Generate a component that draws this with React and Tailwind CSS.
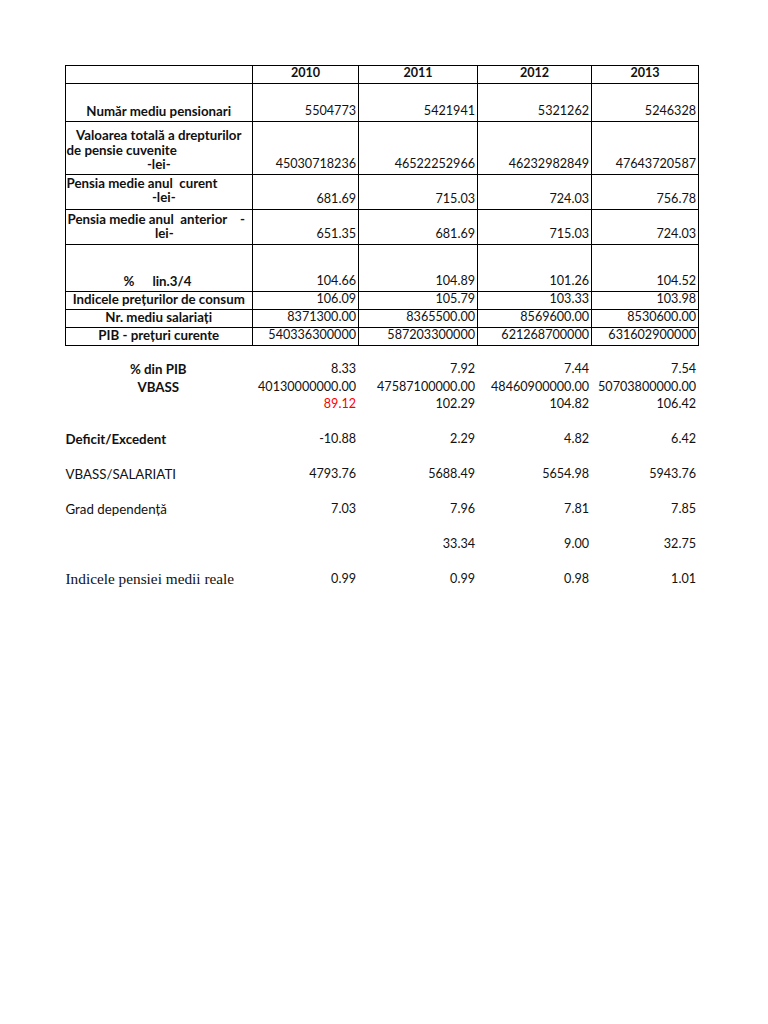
import React from 'react';

const years = ['2010', '2011', '2012', '2013'];

const cell = 'border border-black align-bottom text-right pr-[2px] pb-[2px] whitespace-nowrap';
const labelCell = 'border border-black align-bottom font-bold text-[13.3px] pb-[2px] whitespace-nowrap';

// Table rows: label cell + four values, with row heights taken from the sheet
const rows = [
    {
        h: 'h-[38px]',
        label: <div className="text-center">Număr mediu pensionari</div>,
        values: ['5504773', '5421941', '5321262', '5246328'],
    },
    {
        h: 'h-[53px]',
        label: (
            <>
                <div className="text-center">Valoarea totală a drepturilor</div>
                <div className="pl-[1px]">de pensie cuvenite</div>
                <div className="text-center">-lei-</div>
            </>
        ),
        values: ['45030718236', '46522252966', '46232982849', '47643720587'],
    },
    {
        h: 'h-[35px]',
        pb: 'pb-[4px]',
        label: (
            <>
                <div className="pl-[1px]">Pensia medie anul&nbsp; curent</div>
                <div className="text-center pl-[10px]">-lei-</div>
            </>
        ),
        values: ['681.69', '715.03', '724.03', '756.78'],
    },
    {
        h: 'h-[35px]',
        pb: 'pb-[3px]',
        label: (
            <>
                <div className="pl-[2px] whitespace-pre">{'Pensia medie anul  anterior    -'}</div>
                <div className="text-center pl-[11px]">lei-</div>
            </>
        ),
        values: ['651.35', '681.69', '715.03', '724.03'],
    },
    {
        h: 'h-[47px]',
        label: (
            <div className="flex pl-[58px]">
                <span>%</span>
                <span className="ml-[18px]">lin.3/4</span>
            </div>
        ),
        values: ['104.66', '104.89', '101.26', '104.52'],
    },
    {
        h: 'h-[18px]',
        label: <div className="text-center">Indicele prețurilor de consum</div>,
        values: ['106.09', '105.79', '103.33', '103.98'],
    },
    {
        h: 'h-[18px]',
        label: <div className="text-center">Nr. mediu salariați</div>,
        values: ['8371300.00', '8365500.00', '8569600.00', '8530600.00'],
    },
    {
        h: 'h-[18px]',
        label: <div className="text-center">PIB - prețuri curente</div>,
        values: ['540336300000', '587203300000', '621268700000', '631602900000'],
    },
];

// Rows under the table, no borders
const extra = [
    { label: '% din PIB', style: 'font-bold text-center text-[13.3px]', values: ['8.33', '7.92', '7.44', '7.54'] },
    { label: 'VBASS', style: 'font-bold text-center text-[13.3px]', values: ['40130000000.00', '47587100000.00', '48460900000.00', '50703800000.00'] },
    { label: '', values: ['89.12', '102.29', '104.82', '106.42'], red: true },
    null,
    { label: 'Deficit/Excedent', style: 'font-bold pl-[1px] text-[13.3px]', values: ['-10.88', '2.29', '4.82', '6.42'] },
    null,
    { label: 'VBASS/SALARIATI', style: 'pl-[1px] text-[13.3px]', values: ['4793.76', '5688.49', '5654.98', '5943.76'] },
    null,
    { label: 'Grad dependență', style: 'pl-[1px] text-[13.3px]', values: ['7.03', '7.96', '7.81', '7.85'] },
    null,
    { label: '', values: ['', '33.34', '9.00', '32.75'] },
    null,
    {
        label: 'Indicele pensiei medii reale',
        style: "pl-[1px] text-[15.3px] font-['Liberation_Serif',serif]",
        values: ['0.99', '0.99', '0.98', '1.01'],
    },
];

export default function App() {
    return (
        <div className="w-[768px] h-[1024px] bg-white text-[#111] font-['Lato',sans-serif] text-[12.6px] leading-[14.5px]">
            <div className="pt-[64.5px] pl-[64.5px]">
                <table className="table-fixed border-collapse w-[634px]">
                    <colgroup>
                        <col className="w-[187.5px]" />
                        <col className="w-[106px]" />
                        <col className="w-[119px]" />
                        <col className="w-[114px]" />
                        <col className="w-[107px]" />
                    </colgroup>
                    <thead>
                        <tr className="h-[18px]">
                            <th className="border border-black"></th>
                            {years.map(y => (
                                <th key={y} className="border border-black font-bold text-center align-bottom pb-[2px]">{y}</th>
                            ))}
                        </tr>
                    </thead>
                    <tbody>
                        {rows.map((r, i) => (
                            <tr key={i} className={r.h}>
                                <td className={`${labelCell} ${r.pb || ''}`}>{r.label}</td>
                                {r.values.map((v, j) => (
                                    <td key={j} className={cell}>{v}</td>
                                ))}
                            </tr>
                        ))}
                    </tbody>
                </table>

                <div className="mt-[15px] flex flex-col">
                    {extra.map((r, i) =>
                        r ? (
                            <div key={i} className="grid grid-cols-[187.5px_106px_119px_114px_107px] h-[17.5px] items-center">
                                <div className={`whitespace-nowrap ${r.style || ''}`}>{r.label}</div>
                                {r.values.map((v, j) => (
                                    <div
                                        key={j}
                                        className={`text-right pr-[2px] whitespace-nowrap ${r.red && j === 0 ? 'text-[#ff0000]' : ''}`}
                                    >
                                        {v}
                                    </div>
                                ))}
                            </div>
                        ) : (
                            <div key={i} className="h-[17.5px]" />
                        )
                    )}
                </div>
            </div>
        </div>
    );
}
